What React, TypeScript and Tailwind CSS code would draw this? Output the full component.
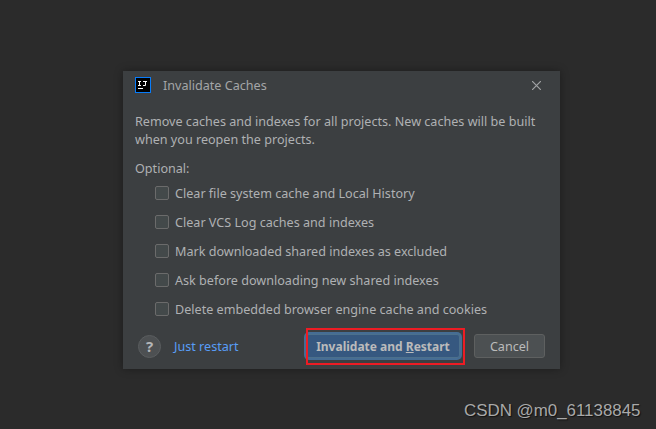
export default function App() {
  const items = [
    "Clear file system cache and Local History",
    "Clear VCS Log caches and indexes",
    "Mark downloaded shared indexes as excluded",
    "Ask before downloading new shared indexes",
    "Delete embedded browser engine cache and cookies",
  ];
  return (
    <div className="w-[656px] h-[429px] bg-[#2b2b2b] overflow-hidden relative font-['Noto_Sans',sans-serif] text-[12.6px] text-[#afb1b3]">
      <div className="absolute left-[123px] top-[71px] w-[437px] h-[298px] bg-[#3c3f41] shadow-[0_0_8px_rgba(0,0,0,0.35)] flex flex-col">
        <div className="h-[28px] shrink-0 flex items-center pl-[12px] pr-[19px]">
          <svg width="16" height="16" viewBox="0 0 16 16" className="shrink-0">
            <rect x="0" y="0" width="16" height="16" fill="#087cfa" />
            <rect x="1" y="1" width="14" height="14" fill="#000" />
            <path d="M3 4h3v1H5v3h1v1H3V8h1V5H3zM8 4h4v1h-1v3.5L10 9H8V8h2V5H8zM3 11h5v1H3z" fill="#fff" />
          </svg>
          <span className="ml-[12px] pt-[2px] leading-[18px] text-[#a4a6a8]">Invalidate Caches</span>
          <svg width="9" height="9" viewBox="0 0 9 9" className="ml-auto" stroke="#a0a2a4" strokeWidth="1.2">
            <path d="M0 0l9 9M9 0l-9 9" />
          </svg>
        </div>
        <div className="pl-[12px] pt-[14px] leading-[18px] shrink-0">
          <p>Remove caches and indexes for all projects. New caches will be built</p>
          <p>when you reopen the projects.</p>
          <p className="mt-[11px]">Optional:</p>
        </div>
        <div className="flex flex-col gap-[9px] mt-[5px] pl-[32px] shrink-0">
          {items.map((t) => (
            <div key={t} className="h-[20px] flex items-center gap-[6px]">
              <span className="w-[14px] h-[14px] rounded-[2px] border border-[#6b6b6b] bg-[#43494a]" />
              <span className="pt-[2px] leading-[20px]">{t}</span>
            </div>
          ))}
        </div>
        <div className="mt-auto h-[46px] shrink-0 flex items-center pl-[15px] pr-[15px]">
          <span className="w-[23px] h-[23px] rounded-full bg-[#4d5052] border border-[#5a5d5f] flex items-center justify-center font-bold text-[15px] text-[#b4b6b8]">?</span>
          <span className="ml-[13px] pt-[2px] text-[#589df6]">Just restart</span>
          <button className="ml-auto h-[24px] w-[154px] pt-[2px] rounded-[3px] bg-[#365880] border border-[#4c708c] shadow-[0_0_0_2px_#466d94] font-bold text-[12px] text-[#bbbbbb]">
            Invalidate and <span className="underline">R</span>estart
          </button>
          <button className="ml-[14px] h-[24px] w-[71px] pt-[2px] rounded-[3px] bg-[#4c5052] border border-[#5e6060] text-[#bbbbbb]">Cancel</button>
        </div>
      </div>
      <div className="absolute left-[306px] top-[328px] w-[159px] h-[37px] border-2 border-[#ed1c24]" />
      <div className="absolute left-[464px] top-[401px] font-['Liberation_Sans',sans-serif] text-[16.9px] leading-[20px] text-[#a9a9a9] [text-shadow:1px_1px_1px_#111]">CSDN @m0_61138845</div>
    </div>
  );
}
